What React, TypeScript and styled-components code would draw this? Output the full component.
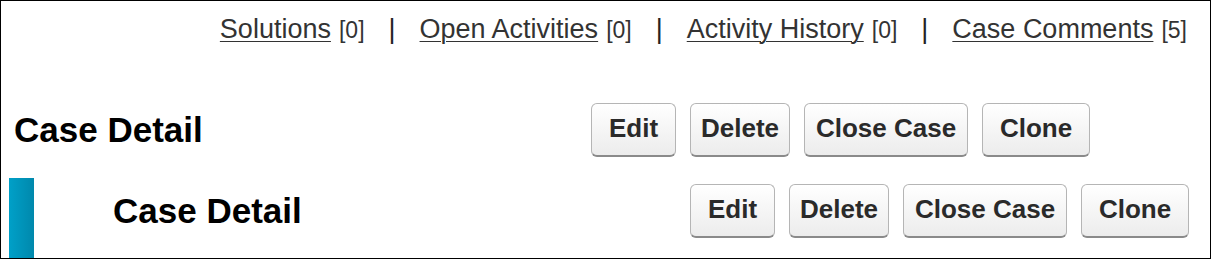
import React from "react";
import styled, { createGlobalStyle } from "styled-components";

const GlobalStyle = createGlobalStyle`
  html, body { margin: 0; padding: 0; background: #fff; }
  body { font-family: "Liberation Sans", Arial, Helvetica, sans-serif; }
  * { box-sizing: border-box; }
`;

const Frame = styled.div`
  width: 1211px;
  height: 259px;
  border: 1px solid #000;
  display: flex;
  flex-direction: column;
  overflow: hidden;
`;

const LinksBar = styled.div`
  display: flex;
  justify-content: flex-end;
  align-items: baseline;
  gap: 24px;
  height: 60px;
  padding: 13px 23px 0 0;
  line-height: 30px;
  color: #222;
`;

const LinkGroup = styled.span`
  display: inline-flex;
  align-items: baseline;
  gap: 8px;
`;

const RelatedLink = styled.a`
  font-size: 27px;
  color: #333;
  text-decoration: underline;
  text-decoration-thickness: 1px;
  text-underline-offset: 3px;
  cursor: pointer;
`;

const Count = styled.span`
  font-size: 23px;
  color: #333;
`;

const Separator = styled.span`
  font-size: 27px;
  color: #222;
`;

const HeaderRow = styled.div<{ $top: number }>`
  display: flex;
  align-items: stretch;
  margin-top: ${(p) => p.$top}px;
`;

const FillRow = styled(HeaderRow)`
  flex: 1;
`;

const AccentBar = styled.div`
  width: 25px;
  margin-left: 8px;
  margin-right: 79px;
  background: linear-gradient(to right, #00a0c8, #0088ac);
`;

const Content = styled.div<{ $pad: number; $indent: number }>`
  display: flex;
  align-items: center;
  height: 54px;
  margin-top: ${(p) => p.$pad}px;
  padding-left: ${(p) => p.$indent}px;
`;

const Title = styled.h2`
  margin: 0;
  width: 577px;
  font-size: 35px;
  font-weight: bold;
  color: #000;
  line-height: 40px;
`;

const Buttons = styled.div`
  display: flex;
  gap: 14px;
`;

const Button = styled.button<{ $w: number }>`
  width: ${(p) => p.$w}px;
  height: 54px;
  padding: 0 0 2px;
  font-family: "Liberation Sans", Arial, Helvetica, sans-serif;
  font-size: 26px;
  font-weight: bold;
  color: #2a2a2a;
  background: linear-gradient(to bottom, #ffffff, #ececec);
  border: 1px solid #b5b5b5;
  border-bottom: 2px solid #8a8a8a;
  border-radius: 6px;
  cursor: pointer;
`;

const links = [
  { label: "Solutions", count: 0 },
  { label: "Open Activities", count: 0 },
  { label: "Activity History", count: 0 },
  { label: "Case Comments", count: 5 },
];

const buttons = [
  { label: "Edit", w: 85 },
  { label: "Delete", w: 100 },
  { label: "Close Case", w: 164 },
  { label: "Clone", w: 108 },
];

function ButtonBar() {
  return (
    <Buttons>
      {buttons.map((b) => (
        <Button key={b.label} $w={b.w}>
          {b.label}
        </Button>
      ))}
    </Buttons>
  );
}

export default function App() {
  return (
    <>
      <GlobalStyle />
      <Frame>
        <LinksBar>
          {links.map((l, i) => (
            <React.Fragment key={l.label}>
              {i > 0 && <Separator>|</Separator>}
              <LinkGroup>
                <RelatedLink>{l.label}</RelatedLink>
                <Count>[{l.count}]</Count>
              </LinkGroup>
            </React.Fragment>
          ))}
        </LinksBar>
        <HeaderRow $top={42}>
          <Content $pad={0} $indent={13}>
            <Title>Case Detail</Title>
            <ButtonBar />
          </Content>
        </HeaderRow>
        <FillRow $top={21}>
          <AccentBar />
          <Content $pad={6} $indent={0}>
            <Title>Case Detail</Title>
            <ButtonBar />
          </Content>
        </FillRow>
      </Frame>
    </>
  );
}
